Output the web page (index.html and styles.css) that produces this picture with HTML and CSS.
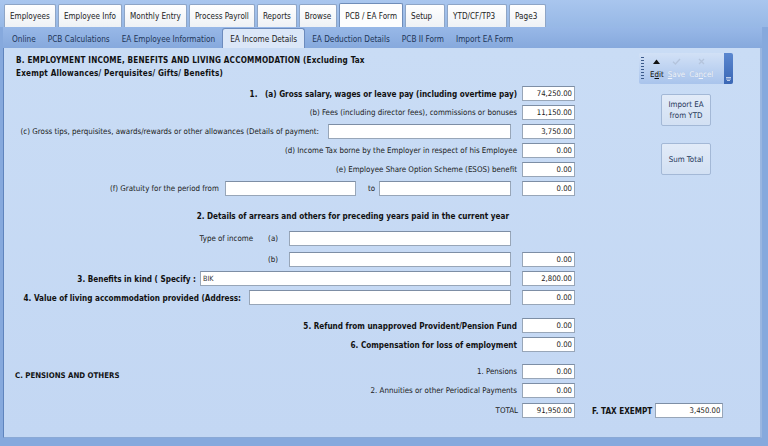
FILE: index.html
```html
<!DOCTYPE html>
<html lang="en">
<head>
  <meta charset="UTF-8" />
  <title>PCB / EA Form</title>
  <link rel="stylesheet" href="styles.css">
</head>
<body>
  <div class="tabs">
    <div class="tab">Employees</div>
    <div class="tab">Employee Info</div>
    <div class="tab">Monthly Entry</div>
    <div class="tab">Process Payroll</div>
    <div class="tab">Reports</div>
    <div class="tab">Browse</div>
    <div class="tab active">PCB / EA Form</div>
    <div class="tab setup">Setup</div>
    <div class="tab ytd">YTD/CF/TP3</div>
    <div class="tab page3">Page3</div>
  </div>

  <div class="frame">
    <div class="subtabs">
      <div class="subtab">Online</div>
      <div class="subtab">PCB Calculations</div>
      <div class="subtab">EA Employee Information</div>
      <div class="subtab active">EA Income Details</div>
      <div class="subtab">EA Deduction Details</div>
      <div class="subtab">PCB II Form</div>
      <div class="subtab">Import EA Form</div>
    </div>

    <div class="panel">
      <div class="form">
        <div class="heading">B. EMPLOYMENT INCOME, BENEFITS AND LIVING ACCOMMODATION (Excluding Tax<br>Exempt Allowances/ Perquisites/ Gifts/ Benefits)</div>

        <div class="row first">
          <span class="lbl bold">1.&nbsp;&nbsp; (a) Gross salary, wages or leave pay (including overtime pay)</span>
          <div class="box amt">74,250.00</div>
        </div>
        <div class="row">
          <span class="lbl">(b) Fees (including director fees), commissions or bonuses</span>
          <div class="box amt">11,150.00</div>
        </div>
        <div class="row">
          <span class="lbl">(c) Gross tips, perquisites, awards/rewards or other allowances (Details of payment:</span>
          <div class="box field w-c"></div>
          <div class="box amt">3,750.00</div>
        </div>
        <div class="row">
          <span class="lbl">(d) Income Tax borne by the Employer in respect of his Employee</span>
          <div class="box amt">0.00</div>
        </div>
        <div class="row">
          <span class="lbl">(e) Employee Share Option Scheme (ESOS) benefit</span>
          <div class="box amt">0.00</div>
        </div>
        <div class="row">
          <span class="lbl">(f) Gratuity for the period from</span>
          <div class="box w-from"></div>
          <span class="lbl to">to</span>
          <div class="box field w-to"></div>
          <div class="box amt">0.00</div>
        </div>

        <div class="subhead">2. Details of arrears and others for preceding years paid in the current year</div>

        <div class="row after-head">
          <span class="lbl type">Type of income</span>
          <span class="lbl letter">(a)</span>
          <div class="box field w-type"></div>
          <div class="no-amt"></div>
        </div>
        <div class="row gap6">
          <span class="lbl letter">(b)</span>
          <div class="box field w-type"></div>
          <div class="box amt">0.00</div>
        </div>
        <div class="row">
          <span class="lbl bold">3. Benefits in kind ( Specify :</span>
          <div class="box field w-bik text">BIK</div>
          <div class="box amt">2,800.00</div>
        </div>
        <div class="row">
          <span class="lbl bold">4. Value of living accommodation provided (Address:</span>
          <div class="box field w-addr"></div>
          <div class="box amt">0.00</div>
        </div>
        <div class="row gap-lg">
          <span class="lbl bold">5. Refund from unapproved Provident/Pension Fund</span>
          <div class="box amt">0.00</div>
        </div>
        <div class="row">
          <span class="lbl bold">6. Compensation for loss of employment</span>
          <div class="box amt">0.00</div>
        </div>

        <div class="row gap-md">
          <span class="section-c">C. PENSIONS AND OTHERS</span>
          <span class="lbl">1. Pensions</span>
          <div class="box amt">0.00</div>
        </div>
        <div class="row">
          <span class="lbl">2. Annuities or other Periodical Payments</span>
          <div class="box amt">0.00</div>
        </div>
        <div class="row total">
          <div class="total-main">
            <span class="lbl">TOTAL</span>
            <div class="box amt">91,950.00</div>
          </div>
          <span class="lbl bold exempt">F. TAX EXEMPT</span>
          <div class="box amt wide">3,450.00</div>
        </div>
      </div>

      <div class="side">
        <div class="toolbar">
          <div class="grip"></div>
          <div class="tb-item">
            <svg width="9" height="7" viewBox="0 0 9 7"><path d="M1 6 L4.5 1.5 L8 6 Z" fill="#111"/></svg>
            <span>E<u>d</u>it</span>
          </div>
          <div class="tb-item off">
            <svg width="9" height="7" viewBox="0 0 9 7"><path d="M1 3.8 L3.4 6 L8 1" fill="none" stroke="#b4c4dc" stroke-width="1.3"/></svg>
            <span><u>S</u>ave</span>
          </div>
          <div class="tb-item off">
            <svg width="9" height="7" viewBox="0 0 9 7"><path d="M2 1 L7 6 M7 1 L2 6" fill="none" stroke="#b4c4dc" stroke-width="1.3"/></svg>
            <span>Ca<u>n</u>cel</span>
          </div>
          <div class="tb-end">
            <svg width="5" height="4" viewBox="0 0 5 4"><path d="M0 0.5 H5 M0 2 H5 M1 3.5 H4" stroke="#dfe8f6" stroke-width="0.8"/></svg>
          </div>
        </div>
        <div class="btn">Import EA<br>from YTD</div>
        <div class="btn second">Sum Total</div>
      </div>
    </div>
  </div>
</body>
</html>
```

FILE: styles.css
```css
body {
  margin: 0;
  width: 768px;
  height: 446px;
  overflow: hidden;
  background: #9ebde8;
  font-family: "DejaVu Sans Condensed", "DejaVu Sans", sans-serif;
  font-size: 7.9px;
  color: #1b1b1b;
}

.tabs {
  display: flex;
  gap: 2px;
  padding: 4px 0 0 4px;
  height: 23px;
  background: linear-gradient(#a9c6ee, #97b8e6);
}

.tab {
  display: flex;
  align-items: center;
  padding: 0 5px;
  font-size: 8.1px;
  background: linear-gradient(#ffffff, #eef1f5);
  border: 1px solid #8ea5c6;
  border-bottom: none;
  border-radius: 2px 2px 0 0;
  color: #222;
}

.tab.active {
  margin-top: -1px;
  background: #fdfdfe;
  border-color: #6f8cb8;
}

.tab.setup { width: 40px; box-sizing: border-box; }
.tab.ytd { width: 60px; box-sizing: border-box; }
.tab.page3 { width: 37px; box-sizing: border-box; }

.frame {
  background: #86a9dd;
  padding: 0 6px 8px 3px;
  height: 419px;
  box-sizing: border-box;
}

.subtabs {
  display: flex;
  align-items: flex-end;
  height: 21px;
  padding-left: 3px;
  font-size: 8.2px;
  background: linear-gradient(#98b8e7, #86a9dd);
}

.subtab {
  display: flex;
  align-items: center;
  height: 19px;
  padding: 0 6px;
  color: #1d3557;
}

.subtab.active {
  background: #dbe7f8;
  border: 1px solid #6c8bbd;
  border-bottom: none;
  border-radius: 3px 3px 0 0;
  padding: 0 7px;
  margin: 0 1px;
  color: #1b1b1b;
}

.panel {
  display: flex;
  height: 390px;
  background: linear-gradient(#c9dcf5, #c3d7f3);
  border-left: 1px solid #5f84bd;
  border-bottom: 1px solid #8aa9d6;
  border-right: 2px solid #9ab6e0;
  box-sizing: border-box;
}

.form {
  width: 571px;
  flex: none;
}

.heading {
  padding: 6px 0 0 12px;
  font-size: 8.1px;
  font-weight: bold;
  letter-spacing: 0.18px;
  line-height: 13px;
  color: #111;
}

.row {
  display: flex;
  align-items: center;
  justify-content: flex-end;
  height: 15px;
  margin-top: 4px;
  gap: 5px;
  white-space: nowrap;
}

.row.first { margin-top: 6px; }
.row.after-head { margin-top: 8px; }
.row.gap6 { margin-top: 6px; }
.row.gap-lg { margin-top: 13px; }
.row.gap-md { margin-top: 12px; }

.lbl { color: #1b1b1b; }
.bold { font-size: 8.1px; font-weight: bold; color: #111; }

.box {
  flex: none;
  height: 15px;
  box-sizing: border-box;
  background: #fff;
  border: 1px solid #98a6b8;
  border-top-color: #7d8ea5;
  display: flex;
  align-items: center;
  padding: 0 2px;
  font-size: 7.7px;
}

.amt {
  width: 53px;
  justify-content: flex-end;
}

.amt.wide { width: 68px; }

.field { margin-right: 6px; }
.w-c { width: 183px; margin-left: 4px; }
.w-from { width: 131px; margin-left: 1px; }
.w-to { width: 132px; }
.to { margin: 0 -1px 0 7px; }
.w-type { width: 222px; }
.w-bik { width: 311px; margin-left: -1px; }
.w-addr { width: 262px; margin-left: 3px; }
.type { margin-right: 10px; }
.letter { margin-right: 6px; }
.text { color: #333; font-size: 7.2px; }

.no-amt { width: 53px; flex: none; }

.subhead {
  margin-top: 14px;
  padding-right: 66px;
  text-align: right;
  font-size: 8.1px;
  font-weight: bold;
  line-height: 13px;
  color: #111;
}

.section-c {
  margin-right: auto;
  margin-left: 11px;
  padding-top: 8px;
  font-size: 7.8px;
  font-weight: bold;
  color: #111;
}

.total-main {
  display: flex;
  align-items: center;
  justify-content: flex-end;
  gap: 4px;
  width: 571px;
  flex: none;
}

.row.total {
  justify-content: flex-start;
  gap: 0;
  margin-top: 5px;
}

.exempt { margin: 0 3px 0 17px; }

.side {
  margin: 5px 0 0 64px;
  width: 94px;
  display: flex;
  flex-direction: column;
  align-items: center;
}

.toolbar {
  display: flex;
  width: 94px;
  height: 31px;
  background: linear-gradient(#d2e1f6, #a9c4ec);
  border-radius: 2px;
}

.grip {
  width: 3px;
  margin: 3px 4px 3px 2px;
  background-image: radial-gradient(#3b5a8a 0.6px, transparent 0.8px);
  background-size: 2px 3px;
}

.tb-item {
  display: flex;
  flex-direction: column;
  align-items: center;
  justify-content: center;
  gap: 5px;
  padding: 0 2px;
  color: #111;
}

.tb-item.off span {
  color: #eef3fb;
  text-shadow: 0 0 1px #a9bbd6;
}

.tb-end {
  margin-left: auto;
  width: 9px;
  background: linear-gradient(#5b87cf, #3a67b5);
  border-radius: 0 2px 2px 0;
  display: flex;
  align-items: flex-end;
  justify-content: center;
  padding-bottom: 3px;
}

.btn {
  width: 50px;
  height: 32px;
  margin-top: 10px;
  box-sizing: border-box;
  display: flex;
  align-items: center;
  justify-content: center;
  text-align: center;
  line-height: 11px;
  background: linear-gradient(#e2ebf8, #d2e0f3);
  border: 1px solid #a3b8d6;
  border-radius: 2px;
  color: #1e3558;
}

.btn.second { margin-top: 17px; }
```
